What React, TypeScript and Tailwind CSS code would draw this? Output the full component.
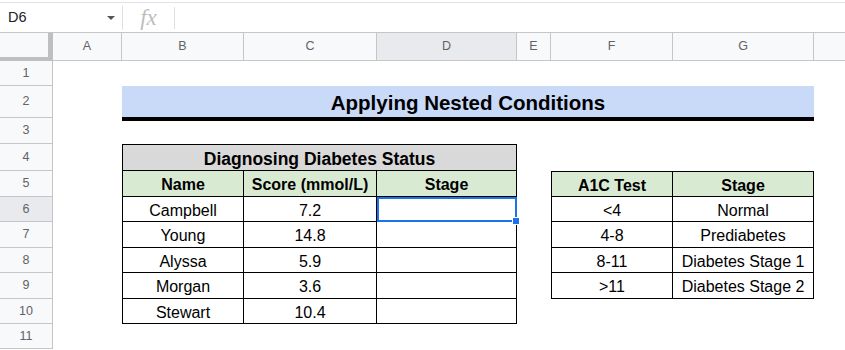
import React from "react";

const data: [string, string][] = [
  ["Campbell", "7.2"],
  ["Young", "14.8"],
  ["Alyssa", "5.9"],
  ["Morgan", "3.6"],
  ["Stewart", "10.4"],
];

const ref: [string, string][] = [
  ["<4", "Normal"],
  ["4-8", "Prediabetes"],
  ["8-11", "Diabetes Stage 1"],
  [">11", "Diabetes Stage 2"],
];

const dataHeights = ["h-[25px]", "h-[26px]", "h-[25px]", "h-[26px]", "h-[25px]"];

function RowHead({ n, active }: { n: number; active?: boolean }) {
  return (
    <div
      className={`w-[53px] shrink-0 h-full flex items-center justify-center border-r border-b border-[#c4c7c5] text-[12.5px] text-[#5f6368] ${
        active ? "bg-[#e8eaed]" : "bg-[#f8f9fa]"
      }`}
    >
      {n}
    </div>
  );
}

function ColHead({ label, w, active }: { label: string; w: string; active?: boolean }) {
  return (
    <div
      className={`${w} shrink-0 h-full flex items-center justify-center border-r border-b border-[#c4c7c5] text-[12.5px] text-[#5f6368] ${
        active ? "bg-[#e8eaed]" : "bg-[#f8f9fa]"
      }`}
    >
      {label}
    </div>
  );
}

export default function App() {
  return (
    <div className="w-[845px] h-[350px] overflow-hidden bg-white font-['Liberation_Sans',Arial,sans-serif] text-black">
      {/* top line */}
      <div className="h-[2px] bg-white" />
      <div className="h-[1px] bg-[#e1e1e8]" />
      {/* formula bar */}
      <div className="h-[29px] flex items-center">
        <div className="w-[122px] shrink-0 flex items-center justify-between pl-[8px] pr-[7px]">
          <span className="text-[14.5px] text-[#222]">D6</span>
          <svg width="8" height="4" viewBox="0 0 8 4">
            <path d="M0 0 L8 0 L4 4 Z" fill="#555" />
          </svg>
        </div>
        <div className="w-px h-[24px] bg-[#e0e0e0]" />
        <div className="w-[51px] shrink-0 flex items-center justify-center">
          <span className="font-['Liberation_Serif',serif] italic text-[23px] text-[#bdbdbd] leading-none">fx</span>
        </div>
        <div className="w-px h-[22px] bg-[#e0e0e0]" />
      </div>
      {/* column header */}
      <div className="flex h-[29px] border-t border-[#c4c7c5]">
        <div className="w-[53px] shrink-0 h-full bg-[#f8f9fa] border-r-[5px] border-b-4 border-[#bfbfbf]" />
        <ColHead label="A" w="w-[69px]" />
        <ColHead label="B" w="w-[122px]" />
        <ColHead label="C" w="w-[133px]" />
        <ColHead label="D" w="w-[140px]" active />
        <ColHead label="E" w="w-[34px]" />
        <ColHead label="F" w="w-[122px]" />
        <ColHead label="G" w="w-[141px]" />
        <div className="flex-1 h-full bg-[#f8f9fa] border-b border-[#c4c7c5]" />
      </div>

      {/* row 1 */}
      <div className="flex h-[25px]">
        <RowHead n={1} />
      </div>
      {/* row 2 */}
      <div className="flex h-[32px]">
        <RowHead n={2} />
        <div className="w-[69px] shrink-0" />
        <div className="w-[692px] shrink-0 h-[35px] bg-[#c9daf8] border-b-4 border-black flex items-center justify-center pt-[3px]">
          <span className="font-bold text-[20.5px]">Applying Nested Conditions</span>
        </div>
      </div>
      {/* row 3 */}
      <div className="flex h-[26px]">
        <RowHead n={3} />
      </div>
      {/* row 4 */}
      <div className="flex h-[27px]">
        <RowHead n={4} />
        <div className="w-[69px] shrink-0" />
        <div className="w-[395px] shrink-0 h-full bg-[#d9d9d9] border border-black flex items-center justify-center pt-[3px]">
          <span className="font-bold text-[17.5px]">Diagnosing Diabetes Status</span>
        </div>
      </div>
      {/* row 5 */}
      <div className="flex h-[26px]">
        <RowHead n={5} />
        <div className="w-[69px] shrink-0" />
        <div className="w-[122px] shrink-0 h-full bg-[#d9ead3] border-l border-r border-b border-black flex items-center justify-center pt-[3px] font-bold text-[16px]">
          Name
        </div>
        <div className="w-[133px] shrink-0 h-full bg-[#d9ead3] border-r border-b border-black flex items-center justify-center pt-[3px] font-bold text-[16px]">
          Score (mmol/L)
        </div>
        <div className="w-[140px] shrink-0 h-full bg-[#d9ead3] border-r border-b border-black flex items-center justify-center pt-[3px] font-bold text-[16px]">
          Stage
        </div>
        <div className="w-[34px] shrink-0" />
        <div className="w-[122px] shrink-0 h-full bg-[#d9ead3] border border-black flex items-center justify-center pt-[3px] font-bold text-[16px]">
          A1C Test
        </div>
        <div className="w-[141px] shrink-0 h-full bg-[#d9ead3] border-t border-r border-b border-black flex items-center justify-center pt-[3px] font-bold text-[16px]">
          Stage
        </div>
      </div>
      {/* rows 6-10 */}
      {data.map(([name, score], i) => (
        <div key={name} className={`flex ${dataHeights[i]}`}>
          <RowHead n={6 + i} active={i === 0} />
          <div className="w-[69px] shrink-0" />
          <div className="w-[122px] shrink-0 h-full border-l border-r border-b border-black flex items-center justify-center pt-[3px] text-[16px]">
            {name}
          </div>
          <div className="w-[133px] shrink-0 h-full border-r border-b border-black flex items-center justify-center pt-[3px] text-[16px]">
            {score}
          </div>
          {i === 0 ? (
            <div className="w-[140px] shrink-0 h-full border-2 border-[#1a73e8] relative">
              <div className="absolute -right-[5px] -bottom-[5px] w-[8px] h-[8px] bg-[#1a73e8] border border-white" />
            </div>
          ) : (
            <div className="w-[140px] shrink-0 h-full border-r border-b border-black" />
          )}
          <div className="w-[34px] shrink-0" />
          {ref[i] ? (
            <>
              <div className="w-[122px] shrink-0 h-full border-l border-r border-b border-black flex items-center justify-center pt-[3px] text-[16px]">
                {ref[i][0]}
              </div>
              <div className="w-[141px] shrink-0 h-full border-r border-b border-black flex items-center justify-center pt-[3px] text-[16px]">
                {ref[i][1]}
              </div>
            </>
          ) : null}
        </div>
      ))}
      {/* row 11 */}
      <div className="flex h-[25px]">
        <RowHead n={11} />
      </div>
    </div>
  );
}
